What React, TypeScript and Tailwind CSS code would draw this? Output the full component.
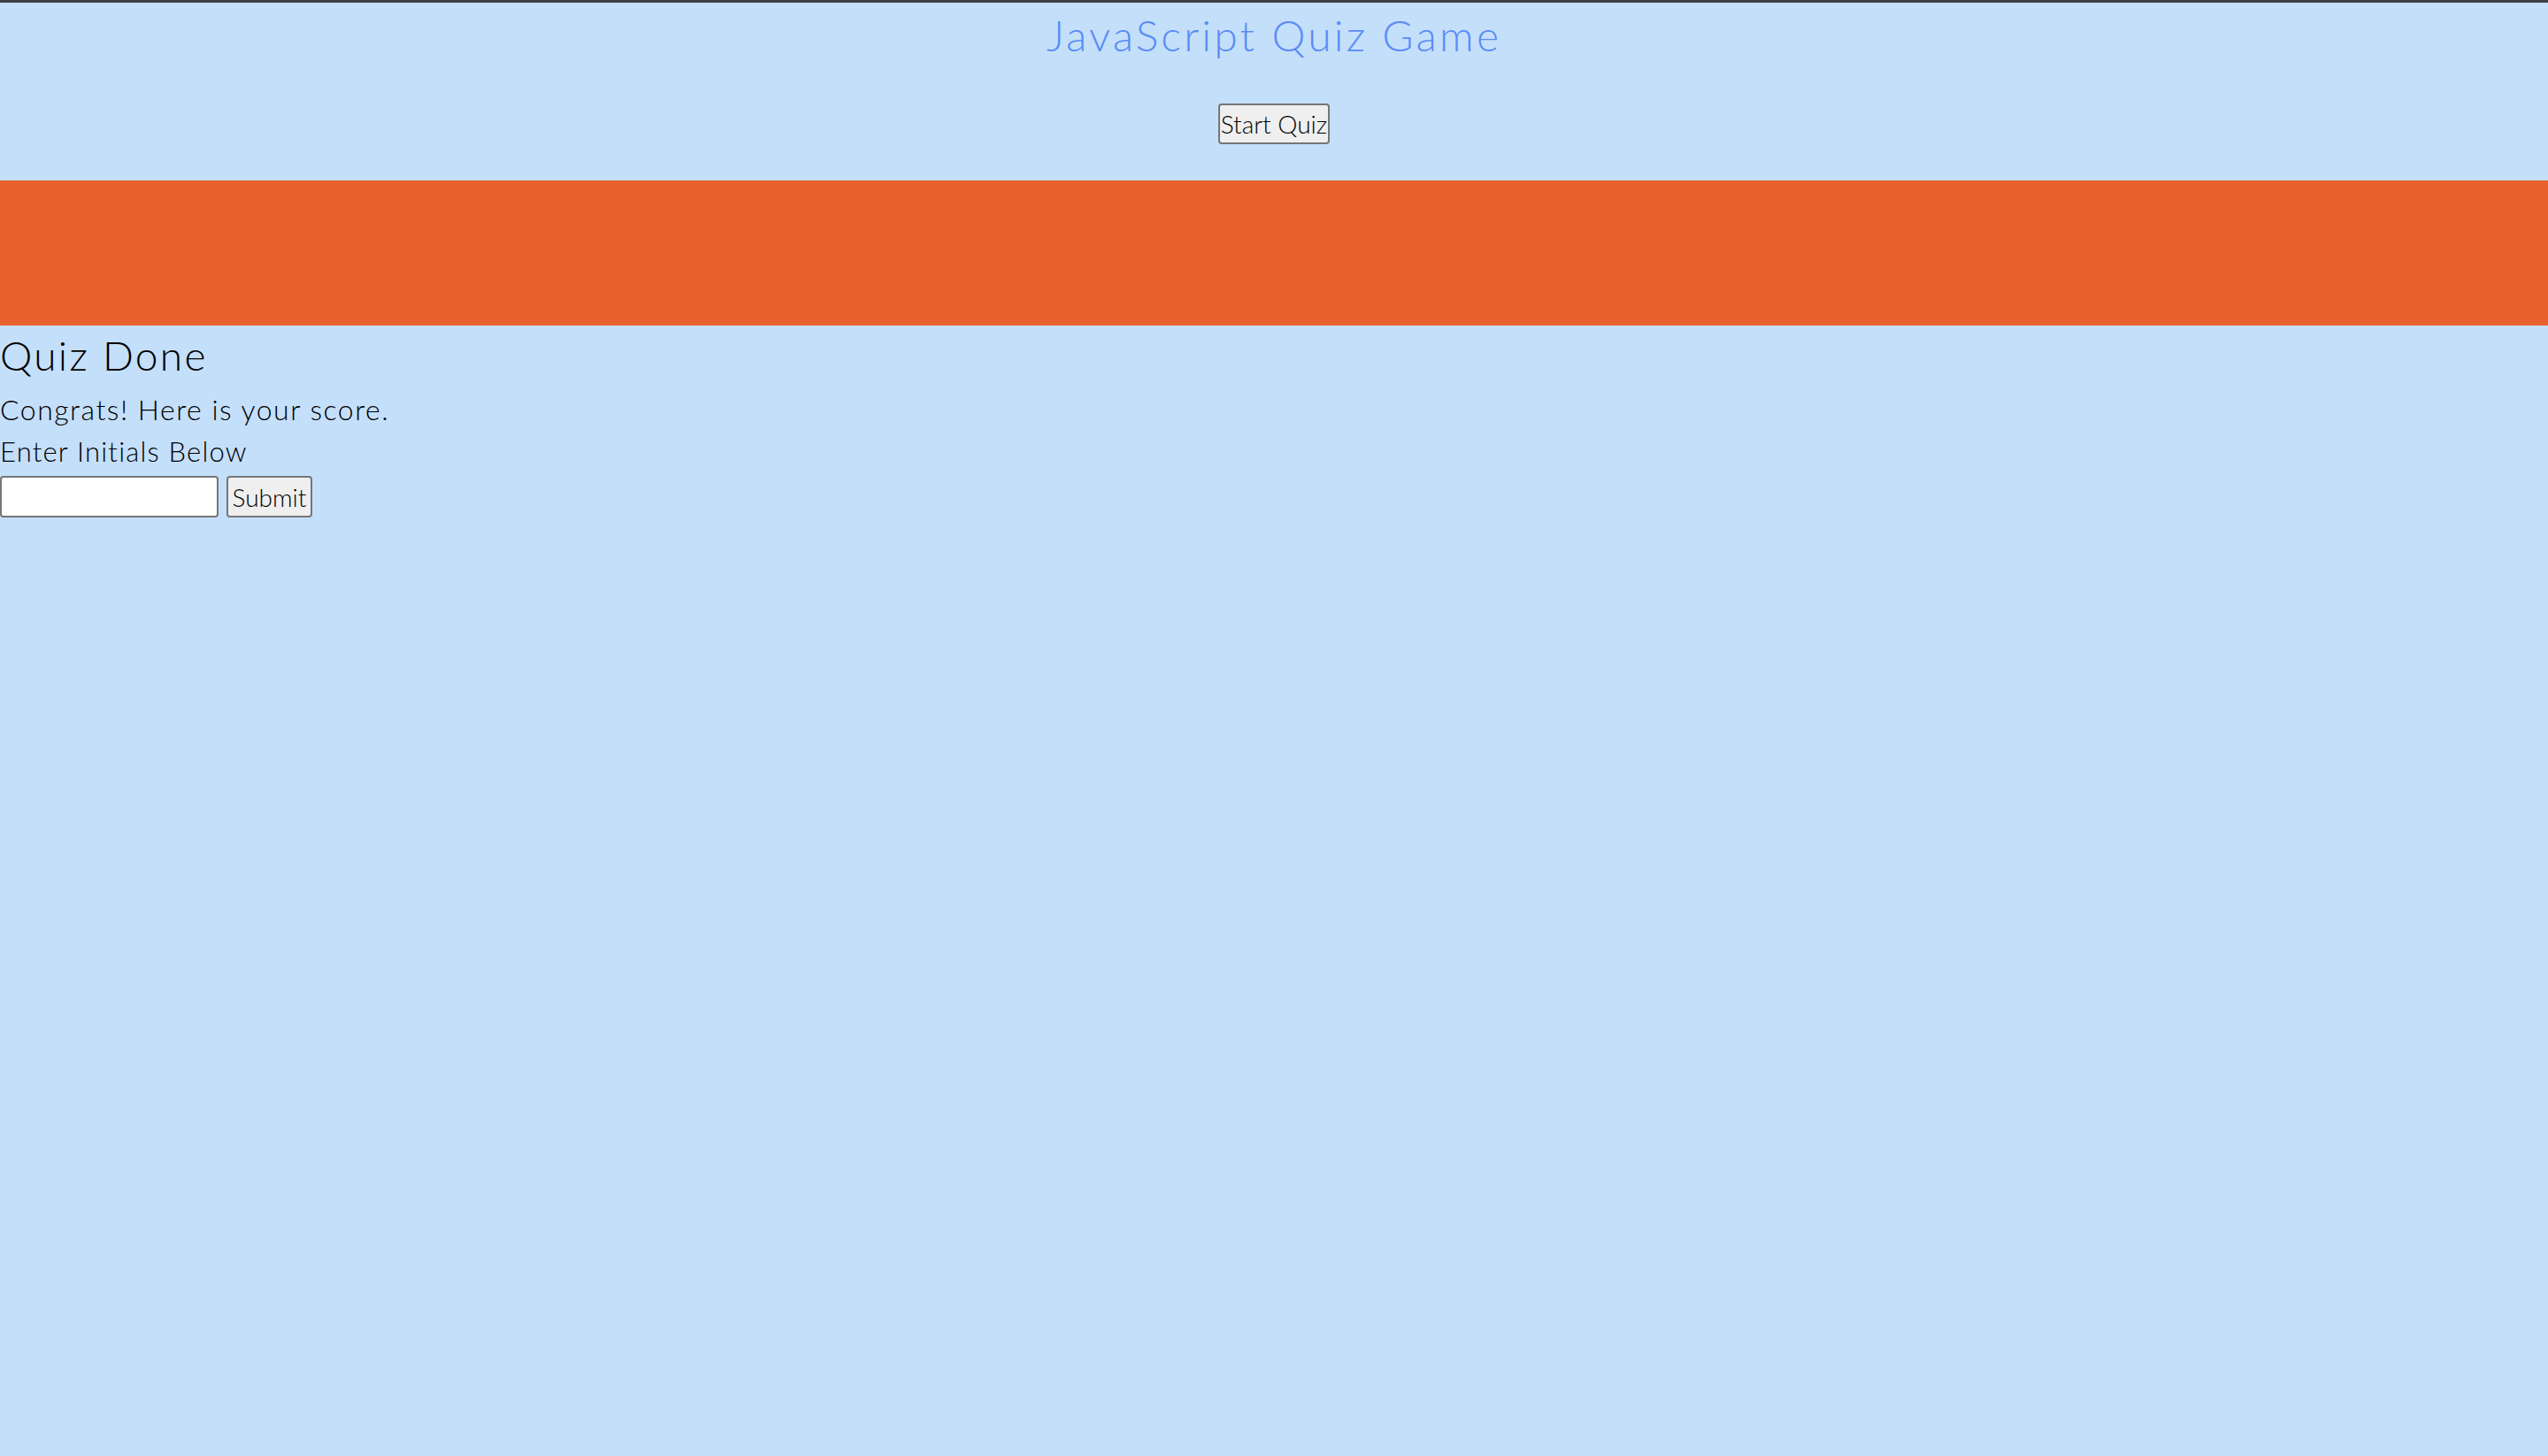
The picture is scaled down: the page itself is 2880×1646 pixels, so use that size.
import React from "react";

export default function App() {
  return (
    <div className="min-h-[1646px] w-full bg-[#c4dffa] font-['Lato','Liberation_Sans',sans-serif] font-light text-black">
      <div className="h-[3px] w-full bg-[#3c3f45]" />
      <header className="flex h-[201px] flex-col items-center">
        <h1 className="mt-[13px] text-[48px] leading-[47px] font-light tracking-[3.2px] text-[#5a8cf6]">
          JavaScript Quiz Game
        </h1>
        <button className="mt-[54px] h-[46px] w-[126px] whitespace-nowrap rounded-[4px] border-2 border-[#767676] bg-[#efefef] p-0 text-[28px] leading-none font-light text-black">
          Start Quiz
        </button>
      </header>
      <div className="h-[164px] w-full bg-[#e9622d]" />
      <section className="flex flex-col items-start">
        <h2 className="mt-[11px] text-[46px] leading-[46px] font-light tracking-[2.3px]">Quiz Done</h2>
        <p className="mt-[22px] text-[32px] leading-[32px] font-light tracking-[1.5px]">Congrats! Here is your score.</p>
        <p className="mt-[16px] text-[31px] leading-[31px] font-light tracking-[1.2px]">Enter Initials Below</p>
        <div className="mt-[12px] flex gap-[9px]">
          <input
            type="text"
            className="h-[47px] w-[247px] rounded-[4px] border-2 border-[#767676] bg-white"
          />
          <button className="h-[47px] w-[97px] whitespace-nowrap rounded-[4px] border-2 border-[#767676] bg-[#efefef] p-0 text-[28px] leading-none font-light text-black">
            Submit
          </button>
        </div>
      </section>
    </div>
  );
}
